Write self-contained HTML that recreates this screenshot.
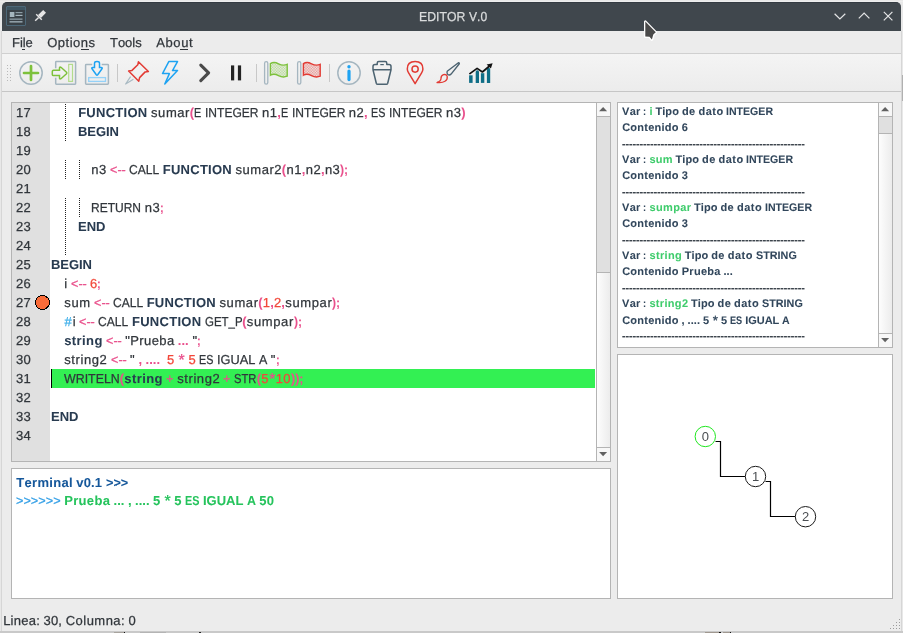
<!DOCTYPE html>
<html><head><meta charset="utf-8">
<style>
*{margin:0;padding:0;box-sizing:border-box}
html,body{width:903px;height:633px;overflow:hidden;background:#e8e8e8;font-family:"Liberation Sans",sans-serif}
.a{position:absolute}
.tx{position:absolute;white-space:pre;line-height:20px;font-kerning:none;text-rendering:geometricPrecision;will-change:transform;-webkit-text-stroke:0.25px currentColor}
.n{color:#31363b}
.k{color:#283b50}
.p{color:#e9508c}
.r{color:#f2483a}
.b{color:#3daee9}
.v{color:#31465b}
.g{color:#3fcc6c}
.w{color:#dadcdd}
.tb{color:#15579a}
.tg{color:#25c35c}
.ta{color:#35a0e6}
</style></head>
<body>
<div class="a" style="left:2px;top:2px;width:899px;height:629px;background:#ececec;border-radius:5px 5px 0 0"></div>
<div class="a" style="left:0;top:1px;width:903px;height:1px;background:#eeeeee"></div>
<div class="a" style="left:2px;top:2px;width:899px;height:29px;background:#40474d;border-radius:5px 5px 0 0;border-top:1px solid #343b42"></div>
<div class="a" style="left:2px;top:53px;width:899px;height:1px;background:#d0d0d0"></div>
<div class="a" style="left:2px;top:54px;width:899px;height:37px;background:linear-gradient(#f4f4f4,#ececec)"></div>
<div class="a" style="left:2px;top:91px;width:899px;height:1px;background:#c6c6c6"></div>

<svg class="a" style="left:0;top:0" width="903" height="100">
<!-- window icon -->
<rect x="6.5" y="6.5" width="19" height="19" rx="0.5" fill="#394147" stroke="#4d6878" stroke-width="1"/>
<rect x="7" y="7" width="18" height="3" fill="#3f5562"/>
<rect x="9.8" y="12" width="4.6" height="5" fill="#a4b5bd"/>
<rect x="15.5" y="12" width="7" height="1.2" fill="#8c9ca4"/>
<rect x="15.5" y="14.8" width="7" height="1.2" fill="#a4b5bd"/>
<rect x="9.5" y="18.5" width="13" height="1.3" fill="#8c9ca4"/>
<rect x="9.5" y="21.2" width="13" height="1.3" fill="#a4b5bd"/>
<!-- pin in title -->
<g stroke="#e6e6e6" stroke-linecap="butt" fill="none">
<path d="M44.6 11.4 L39.5 16.5" stroke-width="4"/>
<path d="M36.2 14.2 L41.8 19.8" stroke-width="1.4"/>
<path d="M38.6 17.4 L35.2 20.8" stroke-width="1.4"/>
</g>
<!-- title buttons -->
<g stroke="#e4e5e6" stroke-width="1.2" fill="none">
<path d="M834.6 13.8 L839.9 19 L845.3 13.8"/>
<path d="M858.8 18.3 L864.1 13 L869.4 18.3"/>
<path d="M883.8 11.8 L892.4 20.4 M892.4 11.8 L883.8 20.4"/>
</g>
<!-- toolbar handle dots -->
<g fill="#b9b9b9">
<rect x="7" y="65" width="1" height="1"/><rect x="7" y="68" width="1" height="1"/><rect x="7" y="71" width="1" height="1"/><rect x="7" y="74" width="1" height="1"/><rect x="7" y="77" width="1" height="1"/><rect x="7" y="80" width="1" height="1"/><rect x="10" y="65" width="1" height="1"/><rect x="10" y="68" width="1" height="1"/><rect x="10" y="71" width="1" height="1"/><rect x="10" y="74" width="1" height="1"/><rect x="10" y="77" width="1" height="1"/><rect x="10" y="80" width="1" height="1"/>
</g>
<!-- separators -->
<rect x="117" y="64" width="1" height="18" fill="#c8c8c8"/>
<rect x="256" y="64" width="1" height="18" fill="#c8c8c8"/>
<rect x="329" y="64" width="1" height="18" fill="#c8c8c8"/>
<!-- 1 plus circle -->
<circle cx="31" cy="73" r="11.2" fill="none" stroke="#a5b6c0" stroke-width="1.5"/>
<path d="M24 73 H38 M31 66 V80" stroke="#7dc13c" stroke-width="2.7" stroke-linecap="round"/>
<!-- 2 import -->
<path d="M55.7 68.2 V62.2 Q55.7 61.5 56.4 61.5 H75 Q75.6 61.5 75.6 62.2 V83.6 Q75.6 84.3 75 84.3 H56.4 Q55.7 84.3 55.7 83.6 V77.7" fill="none" stroke="#a5b6c0" stroke-width="1.5"/>
<rect x="68.7" y="64.4" width="3.8" height="17" fill="none" stroke="#b3dc8c" stroke-width="1.2"/>
<path d="M59.5 70.2 V68 Q59.5 66.5 61 67.3 L66.5 72.3 Q67.2 73 66.5 73.7 L61 78.7 Q59.5 79.5 59.5 78 V75.6 H53.5 Q52.3 75.6 52.3 74.4 V71.4 Q52.3 70.2 53.5 70.2 Z" fill="none" stroke="#7dc13c" stroke-width="1.5"/>
<!-- 3 download -->
<path d="M92.2 64.6 H86.3 Q85.6 64.6 85.6 65.3 V83.6 Q85.6 84.3 86.3 84.3 H107.7 Q108.4 84.3 108.4 83.6 V65.3 Q108.4 64.6 107.7 64.6 H101.7" fill="none" stroke="#a5b6c0" stroke-width="1.5"/>
<rect x="88.7" y="77.6" width="16.8" height="3.8" fill="none" stroke="#93d1f8" stroke-width="1.3"/>
<path d="M94.5 67.5 V63.2 Q94.5 61.5 97 61.5 Q99.5 61.5 99.5 63.2 V67.5 H101 Q103 67.6 101.8 69 L97.7 74.8 Q97 75.7 96.3 74.8 L92.2 69 Q91 67.6 93 67.5 Z" fill="none" stroke="#1ea3f2" stroke-width="1.5"/>
<!-- 4 pushpin -->
<path d="M130.6 76.6 L125.6 84 L133.4 79.2" fill="none" stroke="#a9bac3" stroke-width="1.2" stroke-linejoin="round"/>
<path d="M138.4 61.8 L148.4 71.5 L145.2 71.9 L139.6 77.6 L138.8 81.2 L128.6 71 L132 70.4 L137.8 64.8 Z" fill="none" stroke="#e23b34" stroke-width="1.5" stroke-linejoin="round"/>
<!-- 5 lightning -->
<path d="M168.8 61.6 H177.5 L172.5 70.6 H177.5 L164.8 84 L169.4 73.6 H162.5 Z" fill="none" stroke="#1ea3f2" stroke-width="1.5" stroke-linejoin="round"/>
<!-- 6 chevron -->
<path d="M200.8 65.2 L208.6 72.9 L200.8 80.6" fill="none" stroke="#4a4a4a" stroke-width="3.1" stroke-linecap="round" stroke-linejoin="round"/>
<!-- 7 pause -->
<rect x="231" y="65.4" width="3.2" height="15" fill="#232323"/>
<rect x="237.9" y="65.4" width="3.2" height="15" fill="#232323"/>
<!-- 8 green flag -->
<defs>
<pattern id="dg" width="1.6" height="1.6" patternUnits="userSpaceOnUse"><rect width="0.8" height="0.8" fill="#7dc13c"/><rect x="0.8" y="0.8" width="0.8" height="0.8" fill="#7dc13c"/></pattern>
<pattern id="dr" width="1.6" height="1.6" patternUnits="userSpaceOnUse"><rect width="0.8" height="0.8" fill="#e23b34"/><rect x="0.8" y="0.8" width="0.8" height="0.8" fill="#e23b34"/></pattern>
</defs>
<rect x="264.6" y="61.6" width="3.2" height="22.6" rx="1.6" fill="none" stroke="#a5b6c0" stroke-width="1.3"/>
<path d="M270.4 63.6 Q274 61.4 278.5 63.8 Q283 66.2 287.2 64.4 V76.2 Q283 78 278.5 75.6 Q274 73.2 270.4 75.2 Z" fill="url(#dg)" fill-opacity="0.55" stroke="#7dc13c" stroke-width="1.4"/>
<!-- 9 red flag -->
<rect x="297.6" y="61.6" width="3.2" height="22.6" rx="1.6" fill="none" stroke="#a5b6c0" stroke-width="1.3"/>
<path d="M303.4 63.6 Q307 61.4 311.5 63.8 Q316 66.2 320.2 64.4 V76.2 Q316 78 311.5 75.6 Q307 73.2 303.4 75.2 Z" fill="url(#dr)" fill-opacity="0.55" stroke="#e23b34" stroke-width="1.4"/>
<!-- 10 info -->
<circle cx="349" cy="73" r="11.2" fill="none" stroke="#a5b6c0" stroke-width="1.5"/>
<circle cx="349" cy="66.8" r="1.7" fill="#1ea3f2"/>
<path d="M349 71 V79.6" stroke="#1ea3f2" stroke-width="3.2" stroke-linecap="round"/>
<!-- 11 trash -->
<path d="M372.8 69.8 H391 M373 69.8 L376.3 83.2 Q376.6 84.3 377.7 84.3 H386.3 Q387.4 84.3 387.7 83.2 L391 69.8 V66.4 Q391 64.4 389 64.4 H386.8 V63.2 Q386.8 61.6 385.2 61.6 H378.8 Q377.2 61.6 377.2 63.2 V64.4 H375 Q373 64.4 373 66.4 Z" fill="none" stroke="#4c6371" stroke-width="1.5" stroke-linejoin="round"/>
<path d="M380.3 64.6 H383.8" stroke="#4c6371" stroke-width="1.2"/>
<!-- 12 location -->
<path d="M415.1 83.6 L408.6 72.8 Q407.3 70.6 407.3 68.9 Q407.3 61.6 415.1 61.6 Q422.9 61.6 422.9 68.9 Q422.9 70.6 421.6 72.8 Z" fill="none" stroke="#e23b34" stroke-width="1.5" stroke-linejoin="round"/>
<circle cx="415.1" cy="69.1" r="3.1" fill="none" stroke="#e23b34" stroke-width="1.5"/>
<!-- 13 brush -->
<path d="M458.4 62.7 L447.2 71.3 Q446.4 73.4 447.9 74.7 Q449.7 75.6 451.1 74.1 L459.3 63.7 Q459.5 62.5 458.4 62.7 Z" fill="none" stroke="#4c6371" stroke-width="1.4" stroke-linejoin="round"/>
<path d="M437 82.5 Q441 81.3 441 78.6 Q440.8 75.6 443.5 74.6 Q446.5 74 447.2 76.4 Q447.8 79.5 445 81.3 Q442 83.2 437 82.5 Z" fill="none" stroke="#e23b34" stroke-width="1.3" stroke-linejoin="round"/>
<!-- 14 chart -->
<g fill="#0f6e87">
<rect x="469.1" y="75.3" width="3.5" height="7.6"/>
<path d="M475.7 82.9 V72 Q475.7 70.3 477.35 70.3 Q479 70.3 479 72 V82.9 Z"/>
<rect x="480.9" y="73.2" width="3.4" height="9.7"/>
<path d="M486.9 82.9 V69.4 Q486.9 67.7 488.55 67.7 Q490.2 67.7 490.2 69.4 V82.9 Z"/>
</g>
<path d="M469.9 73.6 L477.1 68.4 L482.4 72 L489.5 66" fill="none" stroke="#111" stroke-width="1.7" stroke-linejoin="round" stroke-linecap="round"/>
<path d="M492.6 63.2 L486.6 64.4 L490.9 68.6 Z" fill="#111"/>
</svg>
<svg class="a" style="left:640px;top:16px" width="22" height="28">
<path d="M5.3 5.6 V20.6 L9.5 20.8 L11.9 23.6 L13.3 18.6 L15.8 16.3 Z" fill="#4a4a4a" stroke="#fff" stroke-width="2.6" stroke-linejoin="round" paint-order="stroke"/>
</svg>

<div class="a" style="left:902px;top:75px;width:1px;height:26px;background:#b0b0b0"></div>
<div class="a" style="left:22px;top:49px;width:3px;height:1px;background:#31363b"></div>
<div class="a" style="left:81px;top:49px;width:8px;height:1px;background:#31363b"></div>
<div class="a" style="left:180px;top:49px;width:8px;height:1px;background:#31363b"></div>
<div class="a" style="left:0;top:631px;width:903px;height:2px;background:#c9c9c9"></div>
<div class="a" style="left:114px;top:632px;width:10px;height:1px;background:#a8a49e"></div>
<div class="a" style="left:124px;top:632px;width:1px;height:1px;background:#111"></div>
<div class="a" style="left:140px;top:632px;width:26px;height:1px;background:#b4b4b4"></div>
<div class="a" style="left:199px;top:632px;width:2px;height:1px;background:#222"></div>
<div class="a" style="left:705px;top:632px;width:14px;height:1px;background:#a09890"></div>
<div class="a" style="left:719px;top:632px;width:2px;height:1px;background:#111"></div>
<div class="a" style="left:723px;top:632px;width:7px;height:1px;background:#a09890"></div>
<div class="a" style="left:730px;top:632px;width:1px;height:1px;background:#111"></div>
<div class="a" style="left:1px;top:31px;width:1px;height:600px;background:#d6d6d6"></div>
<div class="a" style="left:901px;top:31px;width:1px;height:600px;background:#d6d6d6"></div>
<div class="a" style="left:899px;top:619px;width:1px;height:1px;background:#9c9c9c"></div>
<div class="a" style="left:896px;top:622px;width:1px;height:1px;background:#9c9c9c"></div>
<div class="a" style="left:899px;top:622px;width:1px;height:1px;background:#9c9c9c"></div>
<div class="a" style="left:893px;top:625px;width:1px;height:1px;background:#9c9c9c"></div>
<div class="a" style="left:896px;top:625px;width:1px;height:1px;background:#9c9c9c"></div>
<div class="a" style="left:899px;top:625px;width:1px;height:1px;background:#9c9c9c"></div>
<div class="a" style="left:890px;top:628px;width:1px;height:1px;background:#9c9c9c"></div>
<div class="a" style="left:893px;top:628px;width:1px;height:1px;background:#9c9c9c"></div>
<div class="a" style="left:896px;top:628px;width:1px;height:1px;background:#9c9c9c"></div>
<div class="a" style="left:899px;top:628px;width:1px;height:1px;background:#9c9c9c"></div>
<div class="a" style="left:11px;top:102px;width:600px;height:360px;background:#fff;border:1px solid #b4b4b4"></div>
<div class="a" style="left:12px;top:103px;width:38px;height:358px;background:#e0e0e0"></div>
<div class="a" style="left:51px;top:369px;width:544px;height:19px;background:#33f053"></div>
<div class="a" style="left:51px;top:369px;width:1px;height:19px;background:#000"></div>
<svg class="a" style="left:34px;top:294px" width="17" height="17"><circle cx="8.5" cy="8.5" r="7" fill="#fa6c39" stroke="#000" stroke-width="1" shape-rendering="crispEdges"/></svg>
<div class="a" style="left:65px;top:104px;width:1px;height:37px;background:repeating-linear-gradient(#222 0 1px,transparent 1px 2px)"></div>
<div class="a" style="left:65px;top:160px;width:1px;height:19px;background:repeating-linear-gradient(#222 0 1px,transparent 1px 2px)"></div>
<div class="a" style="left:65px;top:198px;width:1px;height:58px;background:repeating-linear-gradient(#222 0 1px,transparent 1px 2px)"></div>
<div class="a" style="left:79px;top:160px;width:1px;height:19px;background:repeating-linear-gradient(#222 0 1px,transparent 1px 2px)"></div>
<div class="a" style="left:79px;top:198px;width:1px;height:19px;background:repeating-linear-gradient(#222 0 1px,transparent 1px 2px)"></div>
<div class="a" style="left:596px;top:103px;width:14px;height:358px;background:linear-gradient(90deg,#fdfdfd,#ececec);border-left:1px solid #b4b4b4"></div>
<div class="a" style="left:597px;top:103px;width:13px;height:14px;background:#f7f7f7;border-bottom:1px solid #b4b4b4"></div>
<div class="a" style="left:597px;top:117px;width:13px;height:156px;background:#e0e0e0;border-bottom:1px solid #b4b4b4"></div>
<div class="a" style="left:597px;top:447px;width:13px;height:14px;background:#f7f7f7;border-top:1px solid #b4b4b4"></div>
<svg class="a" style="left:597px;top:103px" width="13" height="14"><path d="M2.1 8.3 L6.1 4 L10.1 8.3 Z" fill="#616161"/></svg>
<svg class="a" style="left:597px;top:447px" width="13" height="14"><path d="M2.1 5 L6.1 9.3 L10.1 5 Z" fill="#616161"/></svg>
<div class="a" style="left:617px;top:102px;width:276px;height:246px;background:#fff;border:1px solid #b4b4b4"></div>
<svg class="a" style="left:0;top:143px" width="903" height="4"><g fill="#28313a"><rect x="622.31" y="1.1" width="2.89" height="1.3"/><rect x="625.83" y="1.1" width="2.89" height="1.3"/><rect x="629.34" y="1.1" width="2.89" height="1.3"/><rect x="632.86" y="1.1" width="2.89" height="1.3"/><rect x="636.37" y="1.1" width="2.89" height="1.3"/><rect x="639.89" y="1.1" width="2.89" height="1.3"/><rect x="643.41" y="1.1" width="2.89" height="1.3"/><rect x="646.92" y="1.1" width="2.89" height="1.3"/><rect x="650.44" y="1.1" width="2.89" height="1.3"/><rect x="653.95" y="1.1" width="2.89" height="1.3"/><rect x="657.47" y="1.1" width="2.89" height="1.3"/><rect x="660.98" y="1.1" width="2.89" height="1.3"/><rect x="664.50" y="1.1" width="2.89" height="1.3"/><rect x="668.02" y="1.1" width="2.89" height="1.3"/><rect x="671.53" y="1.1" width="2.89" height="1.3"/><rect x="675.05" y="1.1" width="2.89" height="1.3"/><rect x="678.56" y="1.1" width="2.89" height="1.3"/><rect x="682.08" y="1.1" width="2.89" height="1.3"/><rect x="685.59" y="1.1" width="2.89" height="1.3"/><rect x="689.11" y="1.1" width="2.89" height="1.3"/><rect x="692.62" y="1.1" width="2.89" height="1.3"/><rect x="696.14" y="1.1" width="2.89" height="1.3"/><rect x="699.66" y="1.1" width="2.89" height="1.3"/><rect x="703.17" y="1.1" width="2.89" height="1.3"/><rect x="706.69" y="1.1" width="2.89" height="1.3"/><rect x="710.20" y="1.1" width="2.89" height="1.3"/><rect x="713.72" y="1.1" width="2.89" height="1.3"/><rect x="717.23" y="1.1" width="2.89" height="1.3"/><rect x="720.75" y="1.1" width="2.89" height="1.3"/><rect x="724.26" y="1.1" width="2.89" height="1.3"/><rect x="727.78" y="1.1" width="2.89" height="1.3"/><rect x="731.30" y="1.1" width="2.89" height="1.3"/><rect x="734.81" y="1.1" width="2.89" height="1.3"/><rect x="738.33" y="1.1" width="2.89" height="1.3"/><rect x="741.84" y="1.1" width="2.89" height="1.3"/><rect x="745.36" y="1.1" width="2.89" height="1.3"/><rect x="748.87" y="1.1" width="2.89" height="1.3"/><rect x="752.39" y="1.1" width="2.89" height="1.3"/><rect x="755.91" y="1.1" width="2.89" height="1.3"/><rect x="759.42" y="1.1" width="2.89" height="1.3"/><rect x="762.94" y="1.1" width="2.89" height="1.3"/><rect x="766.45" y="1.1" width="2.89" height="1.3"/><rect x="769.97" y="1.1" width="2.89" height="1.3"/><rect x="773.48" y="1.1" width="2.89" height="1.3"/><rect x="777.00" y="1.1" width="2.89" height="1.3"/><rect x="780.51" y="1.1" width="2.89" height="1.3"/><rect x="784.03" y="1.1" width="2.89" height="1.3"/><rect x="787.55" y="1.1" width="2.89" height="1.3"/><rect x="791.06" y="1.1" width="2.89" height="1.3"/><rect x="794.58" y="1.1" width="2.89" height="1.3"/><rect x="798.09" y="1.1" width="2.89" height="1.3"/><rect x="801.61" y="1.1" width="2.89" height="1.3"/></g></svg>
<svg class="a" style="left:0;top:191px" width="903" height="4"><g fill="#28313a"><rect x="622.31" y="1.1" width="2.89" height="1.3"/><rect x="625.83" y="1.1" width="2.89" height="1.3"/><rect x="629.34" y="1.1" width="2.89" height="1.3"/><rect x="632.86" y="1.1" width="2.89" height="1.3"/><rect x="636.37" y="1.1" width="2.89" height="1.3"/><rect x="639.89" y="1.1" width="2.89" height="1.3"/><rect x="643.41" y="1.1" width="2.89" height="1.3"/><rect x="646.92" y="1.1" width="2.89" height="1.3"/><rect x="650.44" y="1.1" width="2.89" height="1.3"/><rect x="653.95" y="1.1" width="2.89" height="1.3"/><rect x="657.47" y="1.1" width="2.89" height="1.3"/><rect x="660.98" y="1.1" width="2.89" height="1.3"/><rect x="664.50" y="1.1" width="2.89" height="1.3"/><rect x="668.02" y="1.1" width="2.89" height="1.3"/><rect x="671.53" y="1.1" width="2.89" height="1.3"/><rect x="675.05" y="1.1" width="2.89" height="1.3"/><rect x="678.56" y="1.1" width="2.89" height="1.3"/><rect x="682.08" y="1.1" width="2.89" height="1.3"/><rect x="685.59" y="1.1" width="2.89" height="1.3"/><rect x="689.11" y="1.1" width="2.89" height="1.3"/><rect x="692.62" y="1.1" width="2.89" height="1.3"/><rect x="696.14" y="1.1" width="2.89" height="1.3"/><rect x="699.66" y="1.1" width="2.89" height="1.3"/><rect x="703.17" y="1.1" width="2.89" height="1.3"/><rect x="706.69" y="1.1" width="2.89" height="1.3"/><rect x="710.20" y="1.1" width="2.89" height="1.3"/><rect x="713.72" y="1.1" width="2.89" height="1.3"/><rect x="717.23" y="1.1" width="2.89" height="1.3"/><rect x="720.75" y="1.1" width="2.89" height="1.3"/><rect x="724.26" y="1.1" width="2.89" height="1.3"/><rect x="727.78" y="1.1" width="2.89" height="1.3"/><rect x="731.30" y="1.1" width="2.89" height="1.3"/><rect x="734.81" y="1.1" width="2.89" height="1.3"/><rect x="738.33" y="1.1" width="2.89" height="1.3"/><rect x="741.84" y="1.1" width="2.89" height="1.3"/><rect x="745.36" y="1.1" width="2.89" height="1.3"/><rect x="748.87" y="1.1" width="2.89" height="1.3"/><rect x="752.39" y="1.1" width="2.89" height="1.3"/><rect x="755.91" y="1.1" width="2.89" height="1.3"/><rect x="759.42" y="1.1" width="2.89" height="1.3"/><rect x="762.94" y="1.1" width="2.89" height="1.3"/><rect x="766.45" y="1.1" width="2.89" height="1.3"/><rect x="769.97" y="1.1" width="2.89" height="1.3"/><rect x="773.48" y="1.1" width="2.89" height="1.3"/><rect x="777.00" y="1.1" width="2.89" height="1.3"/><rect x="780.51" y="1.1" width="2.89" height="1.3"/><rect x="784.03" y="1.1" width="2.89" height="1.3"/><rect x="787.55" y="1.1" width="2.89" height="1.3"/><rect x="791.06" y="1.1" width="2.89" height="1.3"/><rect x="794.58" y="1.1" width="2.89" height="1.3"/><rect x="798.09" y="1.1" width="2.89" height="1.3"/><rect x="801.61" y="1.1" width="2.89" height="1.3"/></g></svg>
<svg class="a" style="left:0;top:239px" width="903" height="4"><g fill="#28313a"><rect x="622.31" y="1.1" width="2.89" height="1.3"/><rect x="625.83" y="1.1" width="2.89" height="1.3"/><rect x="629.34" y="1.1" width="2.89" height="1.3"/><rect x="632.86" y="1.1" width="2.89" height="1.3"/><rect x="636.37" y="1.1" width="2.89" height="1.3"/><rect x="639.89" y="1.1" width="2.89" height="1.3"/><rect x="643.41" y="1.1" width="2.89" height="1.3"/><rect x="646.92" y="1.1" width="2.89" height="1.3"/><rect x="650.44" y="1.1" width="2.89" height="1.3"/><rect x="653.95" y="1.1" width="2.89" height="1.3"/><rect x="657.47" y="1.1" width="2.89" height="1.3"/><rect x="660.98" y="1.1" width="2.89" height="1.3"/><rect x="664.50" y="1.1" width="2.89" height="1.3"/><rect x="668.02" y="1.1" width="2.89" height="1.3"/><rect x="671.53" y="1.1" width="2.89" height="1.3"/><rect x="675.05" y="1.1" width="2.89" height="1.3"/><rect x="678.56" y="1.1" width="2.89" height="1.3"/><rect x="682.08" y="1.1" width="2.89" height="1.3"/><rect x="685.59" y="1.1" width="2.89" height="1.3"/><rect x="689.11" y="1.1" width="2.89" height="1.3"/><rect x="692.62" y="1.1" width="2.89" height="1.3"/><rect x="696.14" y="1.1" width="2.89" height="1.3"/><rect x="699.66" y="1.1" width="2.89" height="1.3"/><rect x="703.17" y="1.1" width="2.89" height="1.3"/><rect x="706.69" y="1.1" width="2.89" height="1.3"/><rect x="710.20" y="1.1" width="2.89" height="1.3"/><rect x="713.72" y="1.1" width="2.89" height="1.3"/><rect x="717.23" y="1.1" width="2.89" height="1.3"/><rect x="720.75" y="1.1" width="2.89" height="1.3"/><rect x="724.26" y="1.1" width="2.89" height="1.3"/><rect x="727.78" y="1.1" width="2.89" height="1.3"/><rect x="731.30" y="1.1" width="2.89" height="1.3"/><rect x="734.81" y="1.1" width="2.89" height="1.3"/><rect x="738.33" y="1.1" width="2.89" height="1.3"/><rect x="741.84" y="1.1" width="2.89" height="1.3"/><rect x="745.36" y="1.1" width="2.89" height="1.3"/><rect x="748.87" y="1.1" width="2.89" height="1.3"/><rect x="752.39" y="1.1" width="2.89" height="1.3"/><rect x="755.91" y="1.1" width="2.89" height="1.3"/><rect x="759.42" y="1.1" width="2.89" height="1.3"/><rect x="762.94" y="1.1" width="2.89" height="1.3"/><rect x="766.45" y="1.1" width="2.89" height="1.3"/><rect x="769.97" y="1.1" width="2.89" height="1.3"/><rect x="773.48" y="1.1" width="2.89" height="1.3"/><rect x="777.00" y="1.1" width="2.89" height="1.3"/><rect x="780.51" y="1.1" width="2.89" height="1.3"/><rect x="784.03" y="1.1" width="2.89" height="1.3"/><rect x="787.55" y="1.1" width="2.89" height="1.3"/><rect x="791.06" y="1.1" width="2.89" height="1.3"/><rect x="794.58" y="1.1" width="2.89" height="1.3"/><rect x="798.09" y="1.1" width="2.89" height="1.3"/><rect x="801.61" y="1.1" width="2.89" height="1.3"/></g></svg>
<svg class="a" style="left:0;top:287px" width="903" height="4"><g fill="#28313a"><rect x="622.31" y="1.1" width="2.89" height="1.3"/><rect x="625.83" y="1.1" width="2.89" height="1.3"/><rect x="629.34" y="1.1" width="2.89" height="1.3"/><rect x="632.86" y="1.1" width="2.89" height="1.3"/><rect x="636.37" y="1.1" width="2.89" height="1.3"/><rect x="639.89" y="1.1" width="2.89" height="1.3"/><rect x="643.41" y="1.1" width="2.89" height="1.3"/><rect x="646.92" y="1.1" width="2.89" height="1.3"/><rect x="650.44" y="1.1" width="2.89" height="1.3"/><rect x="653.95" y="1.1" width="2.89" height="1.3"/><rect x="657.47" y="1.1" width="2.89" height="1.3"/><rect x="660.98" y="1.1" width="2.89" height="1.3"/><rect x="664.50" y="1.1" width="2.89" height="1.3"/><rect x="668.02" y="1.1" width="2.89" height="1.3"/><rect x="671.53" y="1.1" width="2.89" height="1.3"/><rect x="675.05" y="1.1" width="2.89" height="1.3"/><rect x="678.56" y="1.1" width="2.89" height="1.3"/><rect x="682.08" y="1.1" width="2.89" height="1.3"/><rect x="685.59" y="1.1" width="2.89" height="1.3"/><rect x="689.11" y="1.1" width="2.89" height="1.3"/><rect x="692.62" y="1.1" width="2.89" height="1.3"/><rect x="696.14" y="1.1" width="2.89" height="1.3"/><rect x="699.66" y="1.1" width="2.89" height="1.3"/><rect x="703.17" y="1.1" width="2.89" height="1.3"/><rect x="706.69" y="1.1" width="2.89" height="1.3"/><rect x="710.20" y="1.1" width="2.89" height="1.3"/><rect x="713.72" y="1.1" width="2.89" height="1.3"/><rect x="717.23" y="1.1" width="2.89" height="1.3"/><rect x="720.75" y="1.1" width="2.89" height="1.3"/><rect x="724.26" y="1.1" width="2.89" height="1.3"/><rect x="727.78" y="1.1" width="2.89" height="1.3"/><rect x="731.30" y="1.1" width="2.89" height="1.3"/><rect x="734.81" y="1.1" width="2.89" height="1.3"/><rect x="738.33" y="1.1" width="2.89" height="1.3"/><rect x="741.84" y="1.1" width="2.89" height="1.3"/><rect x="745.36" y="1.1" width="2.89" height="1.3"/><rect x="748.87" y="1.1" width="2.89" height="1.3"/><rect x="752.39" y="1.1" width="2.89" height="1.3"/><rect x="755.91" y="1.1" width="2.89" height="1.3"/><rect x="759.42" y="1.1" width="2.89" height="1.3"/><rect x="762.94" y="1.1" width="2.89" height="1.3"/><rect x="766.45" y="1.1" width="2.89" height="1.3"/><rect x="769.97" y="1.1" width="2.89" height="1.3"/><rect x="773.48" y="1.1" width="2.89" height="1.3"/><rect x="777.00" y="1.1" width="2.89" height="1.3"/><rect x="780.51" y="1.1" width="2.89" height="1.3"/><rect x="784.03" y="1.1" width="2.89" height="1.3"/><rect x="787.55" y="1.1" width="2.89" height="1.3"/><rect x="791.06" y="1.1" width="2.89" height="1.3"/><rect x="794.58" y="1.1" width="2.89" height="1.3"/><rect x="798.09" y="1.1" width="2.89" height="1.3"/><rect x="801.61" y="1.1" width="2.89" height="1.3"/></g></svg>
<svg class="a" style="left:0;top:335px" width="903" height="4"><g fill="#28313a"><rect x="622.31" y="1.1" width="2.89" height="1.3"/><rect x="625.83" y="1.1" width="2.89" height="1.3"/><rect x="629.34" y="1.1" width="2.89" height="1.3"/><rect x="632.86" y="1.1" width="2.89" height="1.3"/><rect x="636.37" y="1.1" width="2.89" height="1.3"/><rect x="639.89" y="1.1" width="2.89" height="1.3"/><rect x="643.41" y="1.1" width="2.89" height="1.3"/><rect x="646.92" y="1.1" width="2.89" height="1.3"/><rect x="650.44" y="1.1" width="2.89" height="1.3"/><rect x="653.95" y="1.1" width="2.89" height="1.3"/><rect x="657.47" y="1.1" width="2.89" height="1.3"/><rect x="660.98" y="1.1" width="2.89" height="1.3"/><rect x="664.50" y="1.1" width="2.89" height="1.3"/><rect x="668.02" y="1.1" width="2.89" height="1.3"/><rect x="671.53" y="1.1" width="2.89" height="1.3"/><rect x="675.05" y="1.1" width="2.89" height="1.3"/><rect x="678.56" y="1.1" width="2.89" height="1.3"/><rect x="682.08" y="1.1" width="2.89" height="1.3"/><rect x="685.59" y="1.1" width="2.89" height="1.3"/><rect x="689.11" y="1.1" width="2.89" height="1.3"/><rect x="692.62" y="1.1" width="2.89" height="1.3"/><rect x="696.14" y="1.1" width="2.89" height="1.3"/><rect x="699.66" y="1.1" width="2.89" height="1.3"/><rect x="703.17" y="1.1" width="2.89" height="1.3"/><rect x="706.69" y="1.1" width="2.89" height="1.3"/><rect x="710.20" y="1.1" width="2.89" height="1.3"/><rect x="713.72" y="1.1" width="2.89" height="1.3"/><rect x="717.23" y="1.1" width="2.89" height="1.3"/><rect x="720.75" y="1.1" width="2.89" height="1.3"/><rect x="724.26" y="1.1" width="2.89" height="1.3"/><rect x="727.78" y="1.1" width="2.89" height="1.3"/><rect x="731.30" y="1.1" width="2.89" height="1.3"/><rect x="734.81" y="1.1" width="2.89" height="1.3"/><rect x="738.33" y="1.1" width="2.89" height="1.3"/><rect x="741.84" y="1.1" width="2.89" height="1.3"/><rect x="745.36" y="1.1" width="2.89" height="1.3"/><rect x="748.87" y="1.1" width="2.89" height="1.3"/><rect x="752.39" y="1.1" width="2.89" height="1.3"/><rect x="755.91" y="1.1" width="2.89" height="1.3"/><rect x="759.42" y="1.1" width="2.89" height="1.3"/><rect x="762.94" y="1.1" width="2.89" height="1.3"/><rect x="766.45" y="1.1" width="2.89" height="1.3"/><rect x="769.97" y="1.1" width="2.89" height="1.3"/><rect x="773.48" y="1.1" width="2.89" height="1.3"/><rect x="777.00" y="1.1" width="2.89" height="1.3"/><rect x="780.51" y="1.1" width="2.89" height="1.3"/><rect x="784.03" y="1.1" width="2.89" height="1.3"/><rect x="787.55" y="1.1" width="2.89" height="1.3"/><rect x="791.06" y="1.1" width="2.89" height="1.3"/><rect x="794.58" y="1.1" width="2.89" height="1.3"/><rect x="798.09" y="1.1" width="2.89" height="1.3"/><rect x="801.61" y="1.1" width="2.89" height="1.3"/></g></svg>
<div class="a" style="left:878px;top:103px;width:14px;height:244px;background:linear-gradient(90deg,#fdfdfd,#ececec);border-left:1px solid #b4b4b4"></div>
<div class="a" style="left:879px;top:103px;width:13px;height:14px;background:#f7f7f7;border-bottom:1px solid #b4b4b4"></div>
<div class="a" style="left:879px;top:117px;width:13px;height:17px;background:#e0e0e0;border-bottom:1px solid #b4b4b4"></div>
<div class="a" style="left:879px;top:333px;width:13px;height:14px;background:#f7f7f7;border-top:1px solid #b4b4b4"></div>
<svg class="a" style="left:879px;top:103px" width="13" height="14"><path d="M2.1 8.3 L6.1 4 L10.1 8.3 Z" fill="#616161"/></svg>
<svg class="a" style="left:879px;top:333px" width="13" height="14"><path d="M2.1 5 L6.1 9.3 L10.1 5 Z" fill="#616161"/></svg>
<div class="a" style="left:11px;top:468px;width:600px;height:131px;background:#fff;border:1px solid #b4b4b4"></div>
<div class="a" style="left:617px;top:354px;width:276px;height:245px;background:#fff;border:1px solid #b4b4b4"></div>
<svg class="a" style="left:0;top:0;will-change:transform" width="903" height="633">
<path d="M715.5 441.5 H720.5 V476.5 H745.5 M765.5 481.5 H770.5 V516.5 H795.5" fill="none" stroke="#000" stroke-width="1.2"/>
<circle cx="705.3" cy="436.5" r="10.2" fill="#fff" stroke="#1ee61e" stroke-width="1"/>
<circle cx="755.5" cy="476.5" r="10.2" fill="#fff" stroke="#1a1a1a" stroke-width="1"/>
<circle cx="805.5" cy="516.7" r="10.2" fill="#fff" stroke="#1a1a1a" stroke-width="1"/>
<g font-family="Liberation Sans" font-size="13" fill="#4a4e52" text-anchor="middle">
<text x="705.3" y="441">0</text><text x="755.5" y="481">1</text><text x="805.5" y="521">2</text>
</g></svg>
<div class="tx" style="left:418.73px;top:7px;font-size:13px;"><span class="w" style="display:inline-block;width:46.344px"><span style="display:inline-block;transform:scaleX(0.9434);transform-origin:0 0">EDITOR</span></span><span class="w" style="display:inline-block;width:3.391px"><span style="display:inline-block;transform:scaleX(0.9353);transform-origin:0 0"> </span></span><span class="w" style="display:inline-block;width:18.078px"><span style="display:inline-block;transform:scaleX(0.9263);transform-origin:0 0">V.0</span></span></div>
<div class="tx" style="left:11.53px;top:33px;font-size:13px;"><span class="n" style="letter-spacing:-0.039px;position:relative;left:-0.020px">File</span></div>
<div class="tx" style="left:46.70px;top:33px;font-size:13px;"><span class="n" style="letter-spacing:0.502px;position:relative;left:0.251px">Options</span></div>
<div class="tx" style="left:110.08px;top:33px;font-size:13px;"><span class="n" style="letter-spacing:-0.031px;position:relative;left:-0.016px">Tools</span></div>
<div class="tx" style="left:156.30px;top:33px;font-size:13px;"><span class="n" style="letter-spacing:0.584px;position:relative;left:0.292px">About</span></div>
<div class="tx" style="left:15.74px;top:103px;font-size:13px;"><span class="n" style="letter-spacing:0.203px;position:relative;left:0.102px">17</span></div>
<div class="tx" style="left:77.84px;top:103px;font-size:13px;"><span class="k" style="letter-spacing:0.266px;position:relative;left:0.133px;font-weight:bold;-webkit-text-stroke:0.05px currentColor">FUNCTION</span><span class="n" style="display:inline-block;width:3.391px"><span style="display:inline-block;transform:scaleX(0.9353);transform-origin:0 0"> </span></span><span class="n" style="letter-spacing:0.591px;position:relative;left:0.295px">sumar</span><span class="p" style="letter-spacing:0.078px;position:relative;left:0.039px;font-weight:bold;-webkit-text-stroke:0.05px currentColor">(</span><span class="n" style="display:inline-block;width:7.234px"><span style="display:inline-block;transform:scaleX(0.8342);transform-origin:0 0">E</span></span><span class="n" style="display:inline-block;width:3.391px"><span style="display:inline-block;transform:scaleX(0.9353);transform-origin:0 0"> </span></span><span class="n" style="display:inline-block;width:53.531px"><span style="display:inline-block;transform:scaleX(0.9262);transform-origin:0 0">INTEGER</span></span><span class="n" style="display:inline-block;width:3.391px"><span style="display:inline-block;transform:scaleX(0.9353);transform-origin:0 0"> </span></span><span class="n" style="letter-spacing:0.508px;position:relative;left:0.254px">n1</span><span class="p" style="letter-spacing:0.094px;position:relative;left:0.047px;font-weight:bold;-webkit-text-stroke:0.05px currentColor">,</span><span class="n" style="display:inline-block;width:7.234px"><span style="display:inline-block;transform:scaleX(0.8342);transform-origin:0 0">E</span></span><span class="n" style="display:inline-block;width:3.391px"><span style="display:inline-block;transform:scaleX(0.9353);transform-origin:0 0"> </span></span><span class="n" style="display:inline-block;width:53.531px"><span style="display:inline-block;transform:scaleX(0.9262);transform-origin:0 0">INTEGER</span></span><span class="n" style="display:inline-block;width:3.391px"><span style="display:inline-block;transform:scaleX(0.9353);transform-origin:0 0"> </span></span><span class="n" style="letter-spacing:0.508px;position:relative;left:0.254px">n2</span><span class="p" style="letter-spacing:0.094px;position:relative;left:0.047px;font-weight:bold;-webkit-text-stroke:0.05px currentColor">,</span><span class="n" style="display:inline-block;width:3.391px"><span style="display:inline-block;transform:scaleX(0.9353);transform-origin:0 0"> </span></span><span class="n" style="display:inline-block;width:14.375px"><span style="display:inline-block;transform:scaleX(0.8288);transform-origin:0 0">ES</span></span><span class="n" style="display:inline-block;width:3.391px"><span style="display:inline-block;transform:scaleX(0.9353);transform-origin:0 0"> </span></span><span class="n" style="display:inline-block;width:53.531px"><span style="display:inline-block;transform:scaleX(0.9262);transform-origin:0 0">INTEGER</span></span><span class="n" style="display:inline-block;width:3.391px"><span style="display:inline-block;transform:scaleX(0.9353);transform-origin:0 0"> </span></span><span class="n" style="letter-spacing:0.508px;position:relative;left:0.254px">n3</span><span class="p" style="letter-spacing:0.078px;position:relative;left:0.039px;font-weight:bold;-webkit-text-stroke:0.05px currentColor">)</span></div>
<div class="tx" style="left:15.74px;top:122px;font-size:13px;"><span class="n" style="letter-spacing:0.203px;position:relative;left:0.102px">18</span></div>
<div class="tx" style="left:77.84px;top:122px;font-size:13px;"><span class="k" style="letter-spacing:-0.041px;position:relative;left:-0.020px;font-weight:bold;-webkit-text-stroke:0.05px currentColor">BEGIN</span></div>
<div class="tx" style="left:15.74px;top:141px;font-size:13px;"><span class="n" style="letter-spacing:0.203px;position:relative;left:0.102px">19</span></div>
<div class="tx" style="left:15.74px;top:160px;font-size:13px;"><span class="n" style="letter-spacing:0.203px;position:relative;left:0.102px">20</span></div>
<div class="tx" style="left:91.36px;top:160px;font-size:13px;"><span class="n" style="letter-spacing:0.508px;position:relative;left:0.254px">n3</span><span class="n" style="display:inline-block;width:3.391px"><span style="display:inline-block;transform:scaleX(0.9353);transform-origin:0 0"> </span></span><span class="p" style="display:inline-block;width:15.812px"><span style="display:inline-block;transform:scaleX(0.9731);transform-origin:0 0">&lt;--</span></span><span class="n" style="display:inline-block;width:3.391px"><span style="display:inline-block;transform:scaleX(0.9353);transform-origin:0 0"> </span></span><span class="n" style="display:inline-block;width:30.156px"><span style="display:inline-block;transform:scaleX(0.9270);transform-origin:0 0">CALL</span></span><span class="n" style="display:inline-block;width:3.391px"><span style="display:inline-block;transform:scaleX(0.9353);transform-origin:0 0"> </span></span><span class="k" style="letter-spacing:0.266px;position:relative;left:0.133px;font-weight:bold;-webkit-text-stroke:0.05px currentColor">FUNCTION</span><span class="n" style="display:inline-block;width:3.391px"><span style="display:inline-block;transform:scaleX(0.9353);transform-origin:0 0"> </span></span><span class="n" style="letter-spacing:0.526px;position:relative;left:0.263px">sumar2</span><span class="p" style="letter-spacing:0.078px;position:relative;left:0.039px;font-weight:bold;-webkit-text-stroke:0.05px currentColor">(</span><span class="n" style="letter-spacing:0.508px;position:relative;left:0.254px">n1</span><span class="p" style="letter-spacing:0.094px;position:relative;left:0.047px;font-weight:bold;-webkit-text-stroke:0.05px currentColor">,</span><span class="n" style="letter-spacing:0.508px;position:relative;left:0.254px">n2</span><span class="p" style="letter-spacing:0.094px;position:relative;left:0.047px;font-weight:bold;-webkit-text-stroke:0.05px currentColor">,</span><span class="n" style="letter-spacing:0.508px;position:relative;left:0.254px">n3</span><span class="p" style="display:inline-block;width:8.125px;font-weight:bold;-webkit-text-stroke:0.05px currentColor"><span style="display:inline-block;transform:scaleX(0.9369);transform-origin:0 0">);</span></span></div>
<div class="tx" style="left:15.74px;top:179px;font-size:13px;"><span class="n" style="letter-spacing:0.203px;position:relative;left:0.102px">21</span></div>
<div class="tx" style="left:15.74px;top:198px;font-size:13px;"><span class="n" style="letter-spacing:0.203px;position:relative;left:0.102px">22</span></div>
<div class="tx" style="left:91.36px;top:198px;font-size:13px;"><span class="n" style="display:inline-block;width:50.016px"><span style="display:inline-block;transform:scaleX(0.9233);transform-origin:0 0">RETURN</span></span><span class="n" style="display:inline-block;width:3.391px"><span style="display:inline-block;transform:scaleX(0.9353);transform-origin:0 0"> </span></span><span class="n" style="letter-spacing:0.508px;position:relative;left:0.254px">n3</span><span class="p" style="display:inline-block;width:3.719px;font-weight:bold;-webkit-text-stroke:0.05px currentColor"><span style="display:inline-block;transform:scaleX(0.8561);transform-origin:0 0">;</span></span></div>
<div class="tx" style="left:15.74px;top:217px;font-size:13px;"><span class="n" style="letter-spacing:0.203px;position:relative;left:0.102px">23</span></div>
<div class="tx" style="left:77.84px;top:217px;font-size:13px;"><span class="k" style="letter-spacing:-0.026px;position:relative;left:-0.013px;font-weight:bold;-webkit-text-stroke:0.05px currentColor">END</span></div>
<div class="tx" style="left:15.74px;top:236px;font-size:13px;"><span class="n" style="letter-spacing:0.203px;position:relative;left:0.102px">24</span></div>
<div class="tx" style="left:15.74px;top:255px;font-size:13px;"><span class="n" style="letter-spacing:0.203px;position:relative;left:0.102px">25</span></div>
<div class="tx" style="left:50.80px;top:255px;font-size:13px;"><span class="k" style="letter-spacing:-0.041px;position:relative;left:-0.020px;font-weight:bold;-webkit-text-stroke:0.05px currentColor">BEGIN</span></div>
<div class="tx" style="left:15.74px;top:274px;font-size:13px;"><span class="n" style="letter-spacing:0.203px;position:relative;left:0.102px">26</span></div>
<div class="tx" style="left:64.32px;top:274px;font-size:13px;"><span class="n" style="letter-spacing:0.469px;position:relative;left:0.234px">i</span><span class="n" style="display:inline-block;width:3.391px"><span style="display:inline-block;transform:scaleX(0.9353);transform-origin:0 0"> </span></span><span class="p" style="display:inline-block;width:15.812px"><span style="display:inline-block;transform:scaleX(0.9731);transform-origin:0 0">&lt;--</span></span><span class="n" style="display:inline-block;width:3.391px"><span style="display:inline-block;transform:scaleX(0.9353);transform-origin:0 0"> </span></span><span class="r" style="letter-spacing:0.203px;position:relative;left:0.102px">6</span><span class="p" style="display:inline-block;width:3.719px;font-weight:bold;-webkit-text-stroke:0.05px currentColor"><span style="display:inline-block;transform:scaleX(0.8561);transform-origin:0 0">;</span></span></div>
<div class="tx" style="left:15.74px;top:293px;font-size:13px;"><span class="n" style="letter-spacing:0.203px;position:relative;left:0.102px">27</span></div>
<div class="tx" style="left:64.32px;top:293px;font-size:13px;"><span class="n" style="letter-spacing:0.620px;position:relative;left:0.310px">sum</span><span class="n" style="display:inline-block;width:3.391px"><span style="display:inline-block;transform:scaleX(0.9353);transform-origin:0 0"> </span></span><span class="p" style="display:inline-block;width:15.812px"><span style="display:inline-block;transform:scaleX(0.9731);transform-origin:0 0">&lt;--</span></span><span class="n" style="display:inline-block;width:3.391px"><span style="display:inline-block;transform:scaleX(0.9353);transform-origin:0 0"> </span></span><span class="n" style="display:inline-block;width:30.156px"><span style="display:inline-block;transform:scaleX(0.9270);transform-origin:0 0">CALL</span></span><span class="n" style="display:inline-block;width:3.391px"><span style="display:inline-block;transform:scaleX(0.9353);transform-origin:0 0"> </span></span><span class="k" style="letter-spacing:0.266px;position:relative;left:0.133px;font-weight:bold;-webkit-text-stroke:0.05px currentColor">FUNCTION</span><span class="n" style="display:inline-block;width:3.391px"><span style="display:inline-block;transform:scaleX(0.9353);transform-origin:0 0"> </span></span><span class="n" style="letter-spacing:0.591px;position:relative;left:0.295px">sumar</span><span class="p" style="letter-spacing:0.078px;position:relative;left:0.039px;font-weight:bold;-webkit-text-stroke:0.05px currentColor">(</span><span class="r" style="letter-spacing:0.203px;position:relative;left:0.102px">1</span><span class="p" style="letter-spacing:0.094px;position:relative;left:0.047px;font-weight:bold;-webkit-text-stroke:0.05px currentColor">,</span><span class="r" style="letter-spacing:0.203px;position:relative;left:0.102px">2</span><span class="p" style="letter-spacing:0.094px;position:relative;left:0.047px;font-weight:bold;-webkit-text-stroke:0.05px currentColor">,</span><span class="n" style="letter-spacing:0.620px;position:relative;left:0.310px">sumpar</span><span class="p" style="display:inline-block;width:8.125px;font-weight:bold;-webkit-text-stroke:0.05px currentColor"><span style="display:inline-block;transform:scaleX(0.9369);transform-origin:0 0">);</span></span></div>
<div class="tx" style="left:15.74px;top:312px;font-size:13px;"><span class="n" style="letter-spacing:0.203px;position:relative;left:0.102px">28</span></div>
<div class="tx" style="left:64.32px;top:312px;font-size:13px;"><span class="b" style="letter-spacing:1.172px;position:relative;left:0.586px">#</span><span class="n" style="letter-spacing:0.469px;position:relative;left:0.234px">i</span><span class="n" style="display:inline-block;width:3.391px"><span style="display:inline-block;transform:scaleX(0.9353);transform-origin:0 0"> </span></span><span class="p" style="display:inline-block;width:15.812px"><span style="display:inline-block;transform:scaleX(0.9731);transform-origin:0 0">&lt;--</span></span><span class="n" style="display:inline-block;width:3.391px"><span style="display:inline-block;transform:scaleX(0.9353);transform-origin:0 0"> </span></span><span class="n" style="display:inline-block;width:30.156px"><span style="display:inline-block;transform:scaleX(0.9270);transform-origin:0 0">CALL</span></span><span class="n" style="display:inline-block;width:3.391px"><span style="display:inline-block;transform:scaleX(0.9353);transform-origin:0 0"> </span></span><span class="k" style="letter-spacing:0.266px;position:relative;left:0.133px;font-weight:bold;-webkit-text-stroke:0.05px currentColor">FUNCTION</span><span class="n" style="display:inline-block;width:3.391px"><span style="display:inline-block;transform:scaleX(0.9353);transform-origin:0 0"> </span></span><span class="n" style="display:inline-block;width:37.562px"><span style="display:inline-block;transform:scaleX(0.8812);transform-origin:0 0">GET_P</span></span><span class="p" style="letter-spacing:0.078px;position:relative;left:0.039px;font-weight:bold;-webkit-text-stroke:0.05px currentColor">(</span><span class="n" style="letter-spacing:0.620px;position:relative;left:0.310px">sumpar</span><span class="p" style="display:inline-block;width:8.125px;font-weight:bold;-webkit-text-stroke:0.05px currentColor"><span style="display:inline-block;transform:scaleX(0.9369);transform-origin:0 0">);</span></span></div>
<div class="tx" style="left:15.74px;top:331px;font-size:13px;"><span class="n" style="letter-spacing:0.203px;position:relative;left:0.102px">29</span></div>
<div class="tx" style="left:64.32px;top:331px;font-size:13px;"><span class="k" style="letter-spacing:0.404px;position:relative;left:0.202px;font-weight:bold;-webkit-text-stroke:0.05px currentColor">string</span><span class="n" style="display:inline-block;width:3.391px"><span style="display:inline-block;transform:scaleX(0.9353);transform-origin:0 0"> </span></span><span class="p" style="display:inline-block;width:15.812px"><span style="display:inline-block;transform:scaleX(0.9731);transform-origin:0 0">&lt;--</span></span><span class="n" style="display:inline-block;width:3.391px"><span style="display:inline-block;transform:scaleX(0.9353);transform-origin:0 0"> </span></span><span class="n" style="letter-spacing:0.379px;position:relative;left:0.190px">&quot;Prueba</span><span class="n" style="display:inline-block;width:3.391px"><span style="display:inline-block;transform:scaleX(0.9353);transform-origin:0 0"> </span></span><span class="p" style="letter-spacing:0.042px;position:relative;left:0.021px;font-weight:bold;-webkit-text-stroke:0.05px currentColor">...</span><span class="n" style="display:inline-block;width:3.391px"><span style="display:inline-block;transform:scaleX(0.9353);transform-origin:0 0"> </span></span><span class="n" style="letter-spacing:0.688px;position:relative;left:0.344px">&quot;</span><span class="p" style="display:inline-block;width:3.719px;font-weight:bold;-webkit-text-stroke:0.05px currentColor"><span style="display:inline-block;transform:scaleX(0.8561);transform-origin:0 0">;</span></span></div>
<div class="tx" style="left:15.74px;top:350px;font-size:13px;"><span class="n" style="letter-spacing:0.203px;position:relative;left:0.102px">30</span></div>
<div class="tx" style="left:64.32px;top:350px;font-size:13px;"><span class="n" style="letter-spacing:0.583px;position:relative;left:0.291px">string2</span><span class="n" style="display:inline-block;width:3.391px"><span style="display:inline-block;transform:scaleX(0.9353);transform-origin:0 0"> </span></span><span class="p" style="display:inline-block;width:15.812px"><span style="display:inline-block;transform:scaleX(0.9731);transform-origin:0 0">&lt;--</span></span><span class="n" style="display:inline-block;width:3.391px"><span style="display:inline-block;transform:scaleX(0.9353);transform-origin:0 0"> </span></span><span class="n" style="letter-spacing:0.688px;position:relative;left:0.344px">&quot;</span><span class="n" style="display:inline-block;width:3.391px"><span style="display:inline-block;transform:scaleX(0.9353);transform-origin:0 0"> </span></span><span class="p" style="letter-spacing:0.094px;position:relative;left:0.047px;font-weight:bold;-webkit-text-stroke:0.05px currentColor">,</span><span class="p" style="display:inline-block;width:3.391px;font-weight:bold;-webkit-text-stroke:0.05px currentColor"><span style="display:inline-block;transform:scaleX(0.9353);transform-origin:0 0"> </span></span><span class="p" style="letter-spacing:0.043px;position:relative;left:0.021px;font-weight:bold;-webkit-text-stroke:0.05px currentColor">....</span><span class="n" style="display:inline-block;width:6.766px"><span style="display:inline-block;transform:scaleX(0.9352);transform-origin:0 0">  </span></span><span class="r" style="letter-spacing:0.203px;position:relative;left:0.102px">5</span><span class="n" style="display:inline-block;width:3.391px"><span style="display:inline-block;transform:scaleX(0.9353);transform-origin:0 0"> </span></span><span class="p" style="display:inline-block;width:7.172px;font-size:15.9px;position:relative;top:1.2px;left:0.7px">*</span><span class="n" style="display:inline-block;width:3.391px"><span style="display:inline-block;transform:scaleX(0.9353);transform-origin:0 0"> </span></span><span class="r" style="letter-spacing:0.203px;position:relative;left:0.102px">5</span><span class="n" style="display:inline-block;width:3.391px"><span style="display:inline-block;transform:scaleX(0.9353);transform-origin:0 0"> </span></span><span class="n" style="display:inline-block;width:14.375px"><span style="display:inline-block;transform:scaleX(0.8288);transform-origin:0 0">ES</span></span><span class="n" style="display:inline-block;width:3.391px"><span style="display:inline-block;transform:scaleX(0.9353);transform-origin:0 0"> </span></span><span class="n" style="display:inline-block;width:38.375px"><span style="display:inline-block;transform:scaleX(0.9836);transform-origin:0 0">IGUAL</span></span><span class="n" style="display:inline-block;width:3.391px"><span style="display:inline-block;transform:scaleX(0.9353);transform-origin:0 0"> </span></span><span class="n" style="display:inline-block;width:8.312px"><span style="display:inline-block;transform:scaleX(0.9586);transform-origin:0 0">A</span></span><span class="n" style="display:inline-block;width:3.391px"><span style="display:inline-block;transform:scaleX(0.9353);transform-origin:0 0"> </span></span><span class="n" style="letter-spacing:0.688px;position:relative;left:0.344px">&quot;</span><span class="p" style="display:inline-block;width:3.719px;font-weight:bold;-webkit-text-stroke:0.05px currentColor"><span style="display:inline-block;transform:scaleX(0.8561);transform-origin:0 0">;</span></span></div>
<div class="tx" style="left:15.74px;top:369px;font-size:13px;"><span class="n" style="letter-spacing:0.203px;position:relative;left:0.102px">31</span></div>
<div class="tx" style="left:64.32px;top:369px;font-size:13px;"><span class="n" style="display:inline-block;width:55.734px"><span style="display:inline-block;transform:scaleX(0.9527);transform-origin:0 0">WRITELN</span></span><span class="p" style="letter-spacing:0.078px;position:relative;left:0.039px;font-weight:bold;-webkit-text-stroke:0.05px currentColor">(</span><span class="k" style="letter-spacing:0.404px;position:relative;left:0.202px;font-weight:bold;-webkit-text-stroke:0.05px currentColor">string</span><span class="n" style="display:inline-block;width:3.391px"><span style="display:inline-block;transform:scaleX(0.9353);transform-origin:0 0"> </span></span><span class="p" style="display:inline-block;width:7.438px"><span style="display:inline-block;transform:scaleX(0.9794);transform-origin:0 0">+</span></span><span class="n" style="display:inline-block;width:3.391px"><span style="display:inline-block;transform:scaleX(0.9353);transform-origin:0 0"> </span></span><span class="n" style="letter-spacing:0.583px;position:relative;left:0.291px">string2</span><span class="n" style="display:inline-block;width:3.391px"><span style="display:inline-block;transform:scaleX(0.9353);transform-origin:0 0"> </span></span><span class="p" style="display:inline-block;width:7.438px"><span style="display:inline-block;transform:scaleX(0.9794);transform-origin:0 0">+</span></span><span class="n" style="display:inline-block;width:3.391px"><span style="display:inline-block;transform:scaleX(0.9353);transform-origin:0 0"> </span></span><span class="n" style="display:inline-block;width:22.453px"><span style="display:inline-block;transform:scaleX(0.8636);transform-origin:0 0">STR</span></span><span class="p" style="letter-spacing:0.078px;position:relative;left:0.039px;font-weight:bold;-webkit-text-stroke:0.05px currentColor">(</span><span class="r" style="letter-spacing:0.203px;position:relative;left:0.102px">5</span><span class="p" style="display:inline-block;width:7.172px;font-size:15.9px;position:relative;top:1.2px;left:0.7px">*</span><span class="r" style="letter-spacing:0.203px;position:relative;left:0.102px">10</span><span class="p" style="display:inline-block;width:12.531px;font-weight:bold;-webkit-text-stroke:0.05px currentColor"><span style="display:inline-block;transform:scaleX(0.9639);transform-origin:0 0">));</span></span></div>
<div class="tx" style="left:15.74px;top:388px;font-size:13px;"><span class="n" style="letter-spacing:0.203px;position:relative;left:0.102px">32</span></div>
<div class="tx" style="left:15.74px;top:407px;font-size:13px;"><span class="n" style="letter-spacing:0.203px;position:relative;left:0.102px">33</span></div>
<div class="tx" style="left:50.80px;top:407px;font-size:13px;"><span class="k" style="letter-spacing:-0.026px;position:relative;left:-0.013px;font-weight:bold;-webkit-text-stroke:0.05px currentColor">END</span></div>
<div class="tx" style="left:15.74px;top:426px;font-size:13px;"><span class="n" style="letter-spacing:0.203px;position:relative;left:0.102px">34</span></div>
<div class="tx" style="left:622.30px;top:102px;font-size:11px;"><span class="v" style="letter-spacing:0.229px;position:relative;left:0.115px;font-weight:bold;-webkit-text-stroke:0.05px currentColor">Var</span><span class="v" style="display:inline-block;width:2.875px;font-weight:bold;-webkit-text-stroke:0.05px currentColor"><span style="display:inline-block;transform:scaleX(0.9388);transform-origin:0 0"> </span></span><span class="v" style="display:inline-block;width:3.094px;font-weight:bold;-webkit-text-stroke:0.05px currentColor"><span style="display:inline-block;transform:scaleX(0.8426);transform-origin:0 0">:</span></span><span class="v" style="display:inline-block;width:2.875px;font-weight:bold;-webkit-text-stroke:0.05px currentColor"><span style="display:inline-block;transform:scaleX(0.9388);transform-origin:0 0"> </span></span><span class="g" style="letter-spacing:0.234px;position:relative;left:0.117px;font-weight:bold;-webkit-text-stroke:0.05px currentColor">i</span><span class="v" style="display:inline-block;width:2.875px;font-weight:bold;-webkit-text-stroke:0.05px currentColor"><span style="display:inline-block;transform:scaleX(0.9388);transform-origin:0 0"> </span></span><span class="v" style="letter-spacing:0.062px;position:relative;left:0.031px;font-weight:bold;-webkit-text-stroke:0.05px currentColor">Tipo</span><span class="v" style="display:inline-block;width:2.875px;font-weight:bold;-webkit-text-stroke:0.05px currentColor"><span style="display:inline-block;transform:scaleX(0.9388);transform-origin:0 0"> </span></span><span class="v" style="letter-spacing:0.344px;position:relative;left:0.172px;font-weight:bold;-webkit-text-stroke:0.05px currentColor">de</span><span class="v" style="display:inline-block;width:2.875px;font-weight:bold;-webkit-text-stroke:0.05px currentColor"><span style="display:inline-block;transform:scaleX(0.9388);transform-origin:0 0"> </span></span><span class="v" style="letter-spacing:0.492px;position:relative;left:0.246px;font-weight:bold;-webkit-text-stroke:0.05px currentColor">dato</span><span class="v" style="display:inline-block;width:2.875px;font-weight:bold;-webkit-text-stroke:0.05px currentColor"><span style="display:inline-block;transform:scaleX(0.9388);transform-origin:0 0"> </span></span><span class="v" style="display:inline-block;width:47.078px;font-weight:bold;-webkit-text-stroke:0.05px currentColor"><span style="display:inline-block;transform:scaleX(0.9626);transform-origin:0 0">INTEGER</span></span></div>
<div class="tx" style="left:621.69px;top:118px;font-size:11px;"><span class="v" style="letter-spacing:0.257px;position:relative;left:0.128px;font-weight:bold;-webkit-text-stroke:0.05px currentColor">Contenido</span><span class="v" style="display:inline-block;width:2.875px;font-weight:bold;-webkit-text-stroke:0.05px currentColor"><span style="display:inline-block;transform:scaleX(0.9388);transform-origin:0 0"> </span></span><span class="v" style="letter-spacing:0.172px;position:relative;left:0.086px;font-weight:bold;-webkit-text-stroke:0.05px currentColor">6</span></div>
<div class="tx" style="left:622.30px;top:150px;font-size:11px;"><span class="v" style="letter-spacing:0.229px;position:relative;left:0.115px;font-weight:bold;-webkit-text-stroke:0.05px currentColor">Var</span><span class="v" style="display:inline-block;width:2.875px;font-weight:bold;-webkit-text-stroke:0.05px currentColor"><span style="display:inline-block;transform:scaleX(0.9388);transform-origin:0 0"> </span></span><span class="v" style="display:inline-block;width:3.094px;font-weight:bold;-webkit-text-stroke:0.05px currentColor"><span style="display:inline-block;transform:scaleX(0.8426);transform-origin:0 0">:</span></span><span class="v" style="display:inline-block;width:2.875px;font-weight:bold;-webkit-text-stroke:0.05px currentColor"><span style="display:inline-block;transform:scaleX(0.9388);transform-origin:0 0"> </span></span><span class="g" style="letter-spacing:0.260px;position:relative;left:0.130px;font-weight:bold;-webkit-text-stroke:0.05px currentColor">sum</span><span class="v" style="display:inline-block;width:2.875px;font-weight:bold;-webkit-text-stroke:0.05px currentColor"><span style="display:inline-block;transform:scaleX(0.9388);transform-origin:0 0"> </span></span><span class="v" style="letter-spacing:0.062px;position:relative;left:0.031px;font-weight:bold;-webkit-text-stroke:0.05px currentColor">Tipo</span><span class="v" style="display:inline-block;width:2.875px;font-weight:bold;-webkit-text-stroke:0.05px currentColor"><span style="display:inline-block;transform:scaleX(0.9388);transform-origin:0 0"> </span></span><span class="v" style="letter-spacing:0.344px;position:relative;left:0.172px;font-weight:bold;-webkit-text-stroke:0.05px currentColor">de</span><span class="v" style="display:inline-block;width:2.875px;font-weight:bold;-webkit-text-stroke:0.05px currentColor"><span style="display:inline-block;transform:scaleX(0.9388);transform-origin:0 0"> </span></span><span class="v" style="letter-spacing:0.492px;position:relative;left:0.246px;font-weight:bold;-webkit-text-stroke:0.05px currentColor">dato</span><span class="v" style="display:inline-block;width:2.875px;font-weight:bold;-webkit-text-stroke:0.05px currentColor"><span style="display:inline-block;transform:scaleX(0.9388);transform-origin:0 0"> </span></span><span class="v" style="display:inline-block;width:47.078px;font-weight:bold;-webkit-text-stroke:0.05px currentColor"><span style="display:inline-block;transform:scaleX(0.9626);transform-origin:0 0">INTEGER</span></span></div>
<div class="tx" style="left:621.69px;top:166px;font-size:11px;"><span class="v" style="letter-spacing:0.257px;position:relative;left:0.128px;font-weight:bold;-webkit-text-stroke:0.05px currentColor">Contenido</span><span class="v" style="display:inline-block;width:2.875px;font-weight:bold;-webkit-text-stroke:0.05px currentColor"><span style="display:inline-block;transform:scaleX(0.9388);transform-origin:0 0"> </span></span><span class="v" style="letter-spacing:0.172px;position:relative;left:0.086px;font-weight:bold;-webkit-text-stroke:0.05px currentColor">3</span></div>
<div class="tx" style="left:622.30px;top:198px;font-size:11px;"><span class="v" style="letter-spacing:0.229px;position:relative;left:0.115px;font-weight:bold;-webkit-text-stroke:0.05px currentColor">Var</span><span class="v" style="display:inline-block;width:2.875px;font-weight:bold;-webkit-text-stroke:0.05px currentColor"><span style="display:inline-block;transform:scaleX(0.9388);transform-origin:0 0"> </span></span><span class="v" style="display:inline-block;width:3.094px;font-weight:bold;-webkit-text-stroke:0.05px currentColor"><span style="display:inline-block;transform:scaleX(0.8426);transform-origin:0 0">:</span></span><span class="v" style="display:inline-block;width:2.875px;font-weight:bold;-webkit-text-stroke:0.05px currentColor"><span style="display:inline-block;transform:scaleX(0.9388);transform-origin:0 0"> </span></span><span class="g" style="letter-spacing:0.352px;position:relative;left:0.176px;font-weight:bold;-webkit-text-stroke:0.05px currentColor">sumpar</span><span class="v" style="display:inline-block;width:2.875px;font-weight:bold;-webkit-text-stroke:0.05px currentColor"><span style="display:inline-block;transform:scaleX(0.9388);transform-origin:0 0"> </span></span><span class="v" style="letter-spacing:0.062px;position:relative;left:0.031px;font-weight:bold;-webkit-text-stroke:0.05px currentColor">Tipo</span><span class="v" style="display:inline-block;width:2.875px;font-weight:bold;-webkit-text-stroke:0.05px currentColor"><span style="display:inline-block;transform:scaleX(0.9388);transform-origin:0 0"> </span></span><span class="v" style="letter-spacing:0.344px;position:relative;left:0.172px;font-weight:bold;-webkit-text-stroke:0.05px currentColor">de</span><span class="v" style="display:inline-block;width:2.875px;font-weight:bold;-webkit-text-stroke:0.05px currentColor"><span style="display:inline-block;transform:scaleX(0.9388);transform-origin:0 0"> </span></span><span class="v" style="letter-spacing:0.492px;position:relative;left:0.246px;font-weight:bold;-webkit-text-stroke:0.05px currentColor">dato</span><span class="v" style="display:inline-block;width:2.875px;font-weight:bold;-webkit-text-stroke:0.05px currentColor"><span style="display:inline-block;transform:scaleX(0.9388);transform-origin:0 0"> </span></span><span class="v" style="display:inline-block;width:47.078px;font-weight:bold;-webkit-text-stroke:0.05px currentColor"><span style="display:inline-block;transform:scaleX(0.9626);transform-origin:0 0">INTEGER</span></span></div>
<div class="tx" style="left:621.69px;top:214px;font-size:11px;"><span class="v" style="letter-spacing:0.257px;position:relative;left:0.128px;font-weight:bold;-webkit-text-stroke:0.05px currentColor">Contenido</span><span class="v" style="display:inline-block;width:2.875px;font-weight:bold;-webkit-text-stroke:0.05px currentColor"><span style="display:inline-block;transform:scaleX(0.9388);transform-origin:0 0"> </span></span><span class="v" style="letter-spacing:0.172px;position:relative;left:0.086px;font-weight:bold;-webkit-text-stroke:0.05px currentColor">3</span></div>
<div class="tx" style="left:622.30px;top:246px;font-size:11px;"><span class="v" style="letter-spacing:0.229px;position:relative;left:0.115px;font-weight:bold;-webkit-text-stroke:0.05px currentColor">Var</span><span class="v" style="display:inline-block;width:2.875px;font-weight:bold;-webkit-text-stroke:0.05px currentColor"><span style="display:inline-block;transform:scaleX(0.9388);transform-origin:0 0"> </span></span><span class="v" style="display:inline-block;width:3.094px;font-weight:bold;-webkit-text-stroke:0.05px currentColor"><span style="display:inline-block;transform:scaleX(0.8426);transform-origin:0 0">:</span></span><span class="v" style="display:inline-block;width:2.875px;font-weight:bold;-webkit-text-stroke:0.05px currentColor"><span style="display:inline-block;transform:scaleX(0.9388);transform-origin:0 0"> </span></span><span class="g" style="letter-spacing:0.341px;position:relative;left:0.171px;font-weight:bold;-webkit-text-stroke:0.05px currentColor">string</span><span class="v" style="display:inline-block;width:2.875px;font-weight:bold;-webkit-text-stroke:0.05px currentColor"><span style="display:inline-block;transform:scaleX(0.9388);transform-origin:0 0"> </span></span><span class="v" style="letter-spacing:0.062px;position:relative;left:0.031px;font-weight:bold;-webkit-text-stroke:0.05px currentColor">Tipo</span><span class="v" style="display:inline-block;width:2.875px;font-weight:bold;-webkit-text-stroke:0.05px currentColor"><span style="display:inline-block;transform:scaleX(0.9388);transform-origin:0 0"> </span></span><span class="v" style="letter-spacing:0.344px;position:relative;left:0.172px;font-weight:bold;-webkit-text-stroke:0.05px currentColor">de</span><span class="v" style="display:inline-block;width:2.875px;font-weight:bold;-webkit-text-stroke:0.05px currentColor"><span style="display:inline-block;transform:scaleX(0.9388);transform-origin:0 0"> </span></span><span class="v" style="letter-spacing:0.492px;position:relative;left:0.246px;font-weight:bold;-webkit-text-stroke:0.05px currentColor">dato</span><span class="v" style="display:inline-block;width:2.875px;font-weight:bold;-webkit-text-stroke:0.05px currentColor"><span style="display:inline-block;transform:scaleX(0.9388);transform-origin:0 0"> </span></span><span class="v" style="display:inline-block;width:40.812px;font-weight:bold;-webkit-text-stroke:0.05px currentColor"><span style="display:inline-block;transform:scaleX(0.9820);transform-origin:0 0">STRING</span></span></div>
<div class="tx" style="left:621.69px;top:262px;font-size:11px;"><span class="v" style="letter-spacing:0.257px;position:relative;left:0.128px;font-weight:bold;-webkit-text-stroke:0.05px currentColor">Contenido</span><span class="v" style="display:inline-block;width:2.875px;font-weight:bold;-webkit-text-stroke:0.05px currentColor"><span style="display:inline-block;transform:scaleX(0.9388);transform-origin:0 0"> </span></span><span class="v" style="letter-spacing:0.286px;position:relative;left:0.143px;font-weight:bold;-webkit-text-stroke:0.05px currentColor">Prueba</span><span class="v" style="display:inline-block;width:2.875px;font-weight:bold;-webkit-text-stroke:0.05px currentColor"><span style="display:inline-block;transform:scaleX(0.9388);transform-origin:0 0"> </span></span><span class="v" style="letter-spacing:0.036px;position:relative;left:0.018px;font-weight:bold;-webkit-text-stroke:0.05px currentColor">...</span></div>
<div class="tx" style="left:622.30px;top:294px;font-size:11px;"><span class="v" style="letter-spacing:0.229px;position:relative;left:0.115px;font-weight:bold;-webkit-text-stroke:0.05px currentColor">Var</span><span class="v" style="display:inline-block;width:2.875px;font-weight:bold;-webkit-text-stroke:0.05px currentColor"><span style="display:inline-block;transform:scaleX(0.9388);transform-origin:0 0"> </span></span><span class="v" style="display:inline-block;width:3.094px;font-weight:bold;-webkit-text-stroke:0.05px currentColor"><span style="display:inline-block;transform:scaleX(0.8426);transform-origin:0 0">:</span></span><span class="v" style="display:inline-block;width:2.875px;font-weight:bold;-webkit-text-stroke:0.05px currentColor"><span style="display:inline-block;transform:scaleX(0.9388);transform-origin:0 0"> </span></span><span class="g" style="letter-spacing:0.317px;position:relative;left:0.158px;font-weight:bold;-webkit-text-stroke:0.05px currentColor">string2</span><span class="v" style="display:inline-block;width:2.875px;font-weight:bold;-webkit-text-stroke:0.05px currentColor"><span style="display:inline-block;transform:scaleX(0.9388);transform-origin:0 0"> </span></span><span class="v" style="letter-spacing:0.062px;position:relative;left:0.031px;font-weight:bold;-webkit-text-stroke:0.05px currentColor">Tipo</span><span class="v" style="display:inline-block;width:2.875px;font-weight:bold;-webkit-text-stroke:0.05px currentColor"><span style="display:inline-block;transform:scaleX(0.9388);transform-origin:0 0"> </span></span><span class="v" style="letter-spacing:0.344px;position:relative;left:0.172px;font-weight:bold;-webkit-text-stroke:0.05px currentColor">de</span><span class="v" style="display:inline-block;width:2.875px;font-weight:bold;-webkit-text-stroke:0.05px currentColor"><span style="display:inline-block;transform:scaleX(0.9388);transform-origin:0 0"> </span></span><span class="v" style="letter-spacing:0.492px;position:relative;left:0.246px;font-weight:bold;-webkit-text-stroke:0.05px currentColor">dato</span><span class="v" style="display:inline-block;width:2.875px;font-weight:bold;-webkit-text-stroke:0.05px currentColor"><span style="display:inline-block;transform:scaleX(0.9388);transform-origin:0 0"> </span></span><span class="v" style="display:inline-block;width:40.812px;font-weight:bold;-webkit-text-stroke:0.05px currentColor"><span style="display:inline-block;transform:scaleX(0.9820);transform-origin:0 0">STRING</span></span></div>
<div class="tx" style="left:621.69px;top:310px;font-size:11px;"><span class="v" style="letter-spacing:0.257px;position:relative;left:0.128px;font-weight:bold;-webkit-text-stroke:0.05px currentColor">Contenido</span><span class="v" style="display:inline-block;width:2.875px;font-weight:bold;-webkit-text-stroke:0.05px currentColor"><span style="display:inline-block;transform:scaleX(0.9388);transform-origin:0 0"> </span></span><span class="v" style="letter-spacing:0.078px;position:relative;left:0.039px;font-weight:bold;-webkit-text-stroke:0.05px currentColor">,</span><span class="v" style="display:inline-block;width:2.875px;font-weight:bold;-webkit-text-stroke:0.05px currentColor"><span style="display:inline-block;transform:scaleX(0.9388);transform-origin:0 0"> </span></span><span class="v" style="letter-spacing:0.035px;position:relative;left:0.018px;font-weight:bold;-webkit-text-stroke:0.05px currentColor">....</span><span class="v" style="display:inline-block;width:2.875px;font-weight:bold;-webkit-text-stroke:0.05px currentColor"><span style="display:inline-block;transform:scaleX(0.9388);transform-origin:0 0"> </span></span><span class="v" style="letter-spacing:0.172px;position:relative;left:0.086px;font-weight:bold;-webkit-text-stroke:0.05px currentColor">5</span><span class="v" style="display:inline-block;width:2.875px;font-weight:bold;-webkit-text-stroke:0.05px currentColor"><span style="display:inline-block;transform:scaleX(0.9388);transform-origin:0 0"> </span></span><span class="v" style="display:inline-block;width:5.969px;font-size:13.4px;position:relative;top:1.2px;left:0.7px">*</span><span class="v" style="display:inline-block;width:2.875px;font-weight:bold;-webkit-text-stroke:0.05px currentColor"><span style="display:inline-block;transform:scaleX(0.9388);transform-origin:0 0"> </span></span><span class="v" style="letter-spacing:0.172px;position:relative;left:0.086px;font-weight:bold;-webkit-text-stroke:0.05px currentColor">5</span><span class="v" style="display:inline-block;width:2.875px;font-weight:bold;-webkit-text-stroke:0.05px currentColor"><span style="display:inline-block;transform:scaleX(0.9388);transform-origin:0 0"> </span></span><span class="v" style="display:inline-block;width:12.234px;font-weight:bold;-webkit-text-stroke:0.05px currentColor"><span style="display:inline-block;transform:scaleX(0.8330);transform-origin:0 0">ES</span></span><span class="v" style="display:inline-block;width:2.875px;font-weight:bold;-webkit-text-stroke:0.05px currentColor"><span style="display:inline-block;transform:scaleX(0.9388);transform-origin:0 0"> </span></span><span class="v" style="letter-spacing:-0.003px;position:relative;left:-0.002px;font-weight:bold;-webkit-text-stroke:0.05px currentColor">IGUAL</span><span class="v" style="display:inline-block;width:2.875px;font-weight:bold;-webkit-text-stroke:0.05px currentColor"><span style="display:inline-block;transform:scaleX(0.9388);transform-origin:0 0"> </span></span><span class="v" style="display:inline-block;width:7.625px;font-weight:bold;-webkit-text-stroke:0.05px currentColor"><span style="display:inline-block;transform:scaleX(0.9587);transform-origin:0 0">A</span></span></div>
<div class="tx" style="left:16.15px;top:473px;font-size:13px;"><span class="tb" style="letter-spacing:0.332px;position:relative;left:0.166px;font-weight:bold;-webkit-text-stroke:0.05px currentColor">Terminal</span><span class="tb" style="display:inline-block;width:3.391px;font-weight:bold;-webkit-text-stroke:0.05px currentColor"><span style="display:inline-block;transform:scaleX(0.9353);transform-origin:0 0"> </span></span><span class="tb" style="letter-spacing:0.160px;position:relative;left:0.080px;font-weight:bold;-webkit-text-stroke:0.05px currentColor">v0.1</span><span class="tb" style="display:inline-block;width:3.391px;font-weight:bold;-webkit-text-stroke:0.05px currentColor"><span style="display:inline-block;transform:scaleX(0.9353);transform-origin:0 0"> </span></span><span class="tb" style="display:inline-block;width:22.312px;font-weight:bold;-webkit-text-stroke:0.05px currentColor"><span style="display:inline-block;transform:scaleX(0.9794);transform-origin:0 0">&gt;&gt;&gt;</span></span></div>
<div class="tx" style="left:15.74px;top:491px;font-size:13px;"><span class="ta" style="display:inline-block;width:44.625px"><span style="display:inline-block;transform:scaleX(0.9794);transform-origin:0 0">&gt;&gt;&gt;&gt;&gt;&gt;</span></span><span class="tg" style="display:inline-block;width:3.391px;font-weight:bold;-webkit-text-stroke:0.05px currentColor"><span style="display:inline-block;transform:scaleX(0.9353);transform-origin:0 0"> </span></span><span class="tg" style="letter-spacing:0.339px;position:relative;left:0.169px;font-weight:bold;-webkit-text-stroke:0.05px currentColor">Prueba</span><span class="tg" style="display:inline-block;width:3.391px;font-weight:bold;-webkit-text-stroke:0.05px currentColor"><span style="display:inline-block;transform:scaleX(0.9353);transform-origin:0 0"> </span></span><span class="tg" style="letter-spacing:0.042px;position:relative;left:0.021px;font-weight:bold;-webkit-text-stroke:0.05px currentColor">...</span><span class="tg" style="display:inline-block;width:3.391px;font-weight:bold;-webkit-text-stroke:0.05px currentColor"><span style="display:inline-block;transform:scaleX(0.9353);transform-origin:0 0"> </span></span><span class="tg" style="letter-spacing:0.094px;position:relative;left:0.047px;font-weight:bold;-webkit-text-stroke:0.05px currentColor">,</span><span class="tg" style="display:inline-block;width:3.391px;font-weight:bold;-webkit-text-stroke:0.05px currentColor"><span style="display:inline-block;transform:scaleX(0.9353);transform-origin:0 0"> </span></span><span class="tg" style="letter-spacing:0.043px;position:relative;left:0.021px;font-weight:bold;-webkit-text-stroke:0.05px currentColor">....</span><span class="tg" style="display:inline-block;width:3.391px;font-weight:bold;-webkit-text-stroke:0.05px currentColor"><span style="display:inline-block;transform:scaleX(0.9353);transform-origin:0 0"> </span></span><span class="tg" style="letter-spacing:0.203px;position:relative;left:0.102px;font-weight:bold;-webkit-text-stroke:0.05px currentColor">5</span><span class="tg" style="display:inline-block;width:3.391px;font-weight:bold;-webkit-text-stroke:0.05px currentColor"><span style="display:inline-block;transform:scaleX(0.9353);transform-origin:0 0"> </span></span><span class="tg" style="display:inline-block;width:7.047px;font-size:15.9px;position:relative;top:1.2px;left:0.7px">*</span><span class="tg" style="display:inline-block;width:3.391px;font-weight:bold;-webkit-text-stroke:0.05px currentColor"><span style="display:inline-block;transform:scaleX(0.9353);transform-origin:0 0"> </span></span><span class="tg" style="letter-spacing:0.203px;position:relative;left:0.102px;font-weight:bold;-webkit-text-stroke:0.05px currentColor">5</span><span class="tg" style="display:inline-block;width:3.391px;font-weight:bold;-webkit-text-stroke:0.05px currentColor"><span style="display:inline-block;transform:scaleX(0.9353);transform-origin:0 0"> </span></span><span class="tg" style="display:inline-block;width:14.453px;font-weight:bold;-webkit-text-stroke:0.05px currentColor"><span style="display:inline-block;transform:scaleX(0.8333);transform-origin:0 0">ES</span></span><span class="tg" style="display:inline-block;width:3.391px;font-weight:bold;-webkit-text-stroke:0.05px currentColor"><span style="display:inline-block;transform:scaleX(0.9353);transform-origin:0 0"> </span></span><span class="tg" style="letter-spacing:-0.003px;position:relative;left:-0.002px;font-weight:bold;-webkit-text-stroke:0.05px currentColor">IGUAL</span><span class="tg" style="display:inline-block;width:3.391px;font-weight:bold;-webkit-text-stroke:0.05px currentColor"><span style="display:inline-block;transform:scaleX(0.9353);transform-origin:0 0"> </span></span><span class="tg" style="display:inline-block;width:9.000px;font-weight:bold;-webkit-text-stroke:0.05px currentColor"><span style="display:inline-block;transform:scaleX(0.9584);transform-origin:0 0">A</span></span><span class="tg" style="display:inline-block;width:3.391px;font-weight:bold;-webkit-text-stroke:0.05px currentColor"><span style="display:inline-block;transform:scaleX(0.9353);transform-origin:0 0"> </span></span><span class="tg" style="letter-spacing:0.203px;position:relative;left:0.102px;font-weight:bold;-webkit-text-stroke:0.05px currentColor">50</span></div>
<div class="tx" style="left:2.93px;top:611px;font-size:13px;"><span class="n" style="letter-spacing:0.251px;position:relative;left:0.126px">Linea:</span><span class="n" style="display:inline-block;width:3.448px"><span style="display:inline-block;transform:scaleX(0.9512);transform-origin:0 0"> </span></span><span class="n" style="letter-spacing:0.198px;position:relative;left:0.099px">30,</span><span class="n" style="display:inline-block;width:3.448px"><span style="display:inline-block;transform:scaleX(0.9512);transform-origin:0 0"> </span></span><span class="n" style="letter-spacing:0.474px;position:relative;left:0.237px">Columna:</span><span class="n" style="display:inline-block;width:3.448px"><span style="display:inline-block;transform:scaleX(0.9512);transform-origin:0 0"> </span></span><span class="n" style="letter-spacing:0.330px;position:relative;left:0.165px">0</span></div>
</body></html>
